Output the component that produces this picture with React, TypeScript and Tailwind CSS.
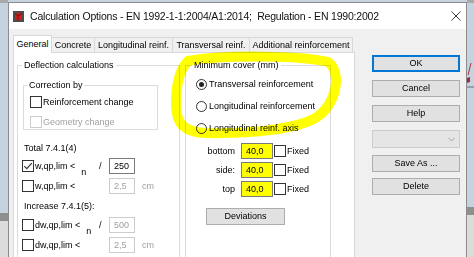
import React from 'react'

function Check({ checked = false, disabled = false }: { checked?: boolean; disabled?: boolean }) {
  return (
    <span
      className={`flex h-[12px] w-[12px] shrink-0 items-center justify-center border bg-white ${
        disabled ? 'border-[#cccccc]' : 'border-[#333333]'
      }`}
    >
      {checked && (
        <svg width="10" height="10" viewBox="0 0 10 10">
          <path d="M1.3 5.2 L3.8 7.7 L8.8 2.2" fill="none" stroke="#333" strokeWidth="1.2" />
        </svg>
      )}
    </span>
  )
}

function Radio({ checked = false }: { checked?: boolean }) {
  return (
    <span className="flex h-[11px] w-[11px] shrink-0 items-center justify-center rounded-full border border-[#333333] bg-white">
      {checked && <span className="h-[5px] w-[5px] rounded-full bg-[#222222]" />}
    </span>
  )
}

function Field({ value, disabled = false }: { value: string; disabled?: boolean }) {
  return (
    <span
      className={`flex h-[16px] w-[26px] shrink-0 items-center border bg-white pl-[4px] ${
        disabled ? 'border-[#cccccc] text-[#a0a0a0]' : 'border-[#7a7a7a] text-black'
      }`}
    >
      {value}
    </span>
  )
}

function Btn({ label, cls = '' }: { label: string; cls?: string }) {
  return (
    <div className={`flex h-[17px] items-center justify-center border border-[#adadad] bg-[#e1e1e1] ${cls}`}>{label}</div>
  )
}

function LimitRow({ label, sub, value, disabled, cm, checked, cls }: {
  label: string
  sub: boolean
  value: string
  disabled: boolean
  cm: boolean
  checked: boolean
  cls: string
}) {
  return (
    <div className={`flex h-[16px] items-center ${cls}`}>
      <Check checked={checked} />
      <span className="ml-[1px] flex w-[64px] items-center">
        <span>{label}</span>
        {sub && <span className="relative top-[6px] ml-[6px]">n</span>}
      </span>
      <span className="w-[10px]">{sub ? '/' : ''}</span>
      <Field value={value} disabled={disabled} />
      {cm && <span className="ml-[7px] text-[#a0a0a0]">cm</span>}
    </div>
  )
}

const tabs = [
  { label: 'Concrete', w: 'w-[43px]' },
  { label: 'Longitudinal reinf.', w: 'w-[78px]' },
  { label: 'Transversal reinf.', w: 'w-[77px]' },
  { label: 'Additional reinforcement', w: 'w-[103px]' },
]

function CoverRow({ label }: { label: string }) {
  return (
    <div className="flex h-[16px] items-center">
      <span className="w-[49px] text-right">{label}</span>
      <span className="ml-[6px] flex h-[16px] w-[32px] items-center border border-[#7a7a7a] bg-[#ffff00] pl-[4px]">40,0</span>
      <span className="ml-[1px]">
        <Check />
      </span>
      <span className="ml-[1px]">Fixed</span>
    </div>
  )
}

export default function App() {
  return (
    <div className="relative flex h-[257px] w-[474px] overflow-hidden bg-[#c6d2de] font-['Liberation_Sans',Arial,sans-serif] text-[9px] leading-[11px] text-black">
      {/* window behind, left */}
      <div className="flex w-[8px] shrink-0 flex-col">
        <div className="h-[3px] bg-[#a9a9a9]" />
        <div className="h-[210px] bg-[#c5d2df]" />
        <div className="h-[8px] bg-[#8f8f8f]" />
        <div className="flex-1 bg-[#dcdcdc]" />
      </div>

      {/* dialog */}
      <div className="mt-[2px] flex w-[459px] shrink-0 flex-col border-x border-t border-[#8c8c8c] bg-[#f0f0f0]">
        <div className="flex h-[26px] shrink-0 items-center bg-white pl-[4px] pr-[5px]">
          <svg width="11" height="11" viewBox="0 0 11 11">
            <rect x="0" y="0" width="11" height="11" fill="#4d4d4d" />
            <path d="M2 3 L6 1.5 L9 3 L9 8 L5 9.5 L2 8 Z" fill="#d21e1e" />
            <path d="M2 3 L5 4.5 L9 3 M5 4.5 L5 9.5" fill="none" stroke="#5a0d0d" strokeWidth="0.8" />
          </svg>
          <span className="ml-[6px] text-[10.5px] tracking-[-0.2px] text-[#111]">
            Calculation Options - EN 1992-1-1:2004/A1:2014;&nbsp; Regulation - EN 1990:2002
          </span>
          <svg className="ml-auto" width="10" height="10" viewBox="0 0 10 10">
            <path d="M0.5 0.5 L9.5 9.5 M9.5 0.5 L0.5 9.5" stroke="#222" strokeWidth="0.9" />
          </svg>
        </div>

        <div className="flex items-start pl-[4px] pt-[6px]">
          {/* tabs + page */}
          <div className="flex w-[342px] shrink-0 flex-col">
            <div className="flex h-[17px] items-end">
              <div className="relative z-10 -mb-px flex h-[18px] w-[39px] items-center justify-center border-x border-t border-[#d9d9d9] bg-white">
                General
              </div>
              {tabs.map((t) => (
                <div
                  key={t.label}
                  className={`flex h-[15px] items-center justify-center border-r border-t border-[#d9d9d9] bg-[#f0f0f0] ${t.w}`}
                >
                  {t.label}
                </div>
              ))}
            </div>

            <div className="flex h-[230px] items-start border border-[#d9d9d9] bg-white pl-[3px]">
              {/* Deflection */}
              <fieldset className="mt-[7px] h-[215px] w-[163px] shrink-0 border border-[#dcdcdc]">
                <legend className="ml-[4px] px-[2px]">Deflection calculations</legend>
                <div className="flex flex-col pl-[4px]">
                  <fieldset className="ml-[1px] mt-[9px] w-[135px] border border-[#dcdcdc]">
                    <legend className="ml-[4px] px-[1px]">Correction by</legend>
                    <div className="flex flex-col gap-[8px] pb-[1px] pl-[6px] pt-[5px]">
                      <div className="flex h-[12px] items-center">
                        <Check />
                        <span className="ml-[1px]">Reinforcement change</span>
                      </div>
                      <div className="flex h-[12px] items-center">
                        <Check disabled />
                        <span className="ml-[1px] text-[#a0a0a0]">Geometry change</span>
                      </div>
                    </div>
                  </fieldset>
                  <div className="ml-[2px] mt-[13px]">Total 7.4.1(4)</div>
                  <LimitRow label="w,qp,lim <" sub value="250" disabled={false} cm={false} checked cls="mt-[4px]" />
                  <LimitRow label="w,qp,lim <" sub={false} value="2,5" disabled cm checked={false} cls="mt-[4px]" />
                  <div className="ml-[2px] mt-[7px]">Increase 7.4.1(5):</div>
                  <LimitRow label="dw,qp,lim <" sub value="500" disabled cm={false} checked={false} cls="mt-[5px]" />
                  <LimitRow label="dw,qp,lim <" sub={false} value="2,5" disabled cm checked={false} cls="mt-[4px]" />
                </div>
              </fieldset>

              {/* Minimum cover */}
              <fieldset className="ml-[5px] mt-[7px] h-[215px] w-[146px] shrink-0 border border-[#dcdcdc]">
                <legend className="ml-[6px] px-[2px]">Minimum cover (mm)</legend>
                <div className="flex flex-col gap-[10px] pl-[10px] pt-[7px]">
                  <div className="flex h-[12px] items-center">
                    <Radio checked />
                    <span className="ml-[2px]">Transversal reinforcement</span>
                  </div>
                  <div className="flex h-[12px] items-center">
                    <Radio />
                    <span className="ml-[2px]">Longitudinal reinforcement</span>
                  </div>
                  <div className="flex h-[12px] items-center">
                    <Radio />
                    <span className="ml-[2px]">Longitudinal reinf. axis</span>
                  </div>
                </div>
                <div className="mt-[9px] flex flex-col gap-[3px]">
                  <CoverRow label="bottom" />
                  <CoverRow label="side:" />
                  <CoverRow label="top" />
                </div>
                <Btn label="Deviations" cls="ml-[20px] mt-[11px] w-[79px]" />
              </fieldset>
            </div>
          </div>

          {/* command buttons */}
          <div className="ml-[17px] mt-[20px] flex w-[88px] shrink-0 flex-col">
            <div className="flex h-[17px] items-center justify-center border border-[#0078d7] bg-[#e1e1e1] shadow-[inset_0_0_0_1px_#0078d7]">
              OK
            </div>
            <Btn label="Cancel" cls="mt-[8px]" />
            <Btn label="Help" cls="mt-[8px]" />
            <div className="mt-[8px] flex h-[18px] items-center justify-end border border-[#cccccc] bg-[#e5e5e5] pr-[4px]">
              <svg width="7" height="5" viewBox="0 0 7 5">
                <path d="M0.5 1 L3.5 4 L6.5 1" fill="none" stroke="#9a9a9a" strokeWidth="0.9" />
              </svg>
            </div>
            <Btn label="Save As ..." cls="mt-[7px]" />
            <Btn label="Delete" cls="mt-[6px]" />
          </div>
        </div>
      </div>

      {/* window behind, right */}
      <div className="flex flex-1 flex-col bg-[#c5d2df]">
        <div className="h-[3px] bg-[#a9a9a9]" />
        <svg width="7" height="204" viewBox="0 0 7 204">
          <path d="M1 72 L4 60" stroke="#b0303a" strokeWidth="1" />
          <path d="M0 75 L3 74 L3 79 L0 80 Z" fill="#9a3040" />
          <path d="M0 84 L7 84" stroke="#6a6a7a" strokeWidth="1" />
        </svg>
        <div className="h-[8px] bg-[#8f8f8f]" />
        <div className="flex-1 bg-[#dcdcdc]" />
      </div>

      {/* highlighter annotation */}
      <svg className="pointer-events-none absolute left-0 top-0 mix-blend-multiply" width="474" height="257" viewBox="0 0 474 257">
        <path
          d="M188 61 C 222 55, 300 55, 328 62 C 342 72, 337 103, 317 117 C 298 129, 252 134, 205 133 C 184 132, 176 124, 176 104 C 176 86, 179 70, 188 61 Z"
          fill="none"
          stroke="#ffff00"
          strokeWidth="10"
          strokeLinecap="round"
          strokeLinejoin="round"
        />
      </svg>
    </div>
  )
}
